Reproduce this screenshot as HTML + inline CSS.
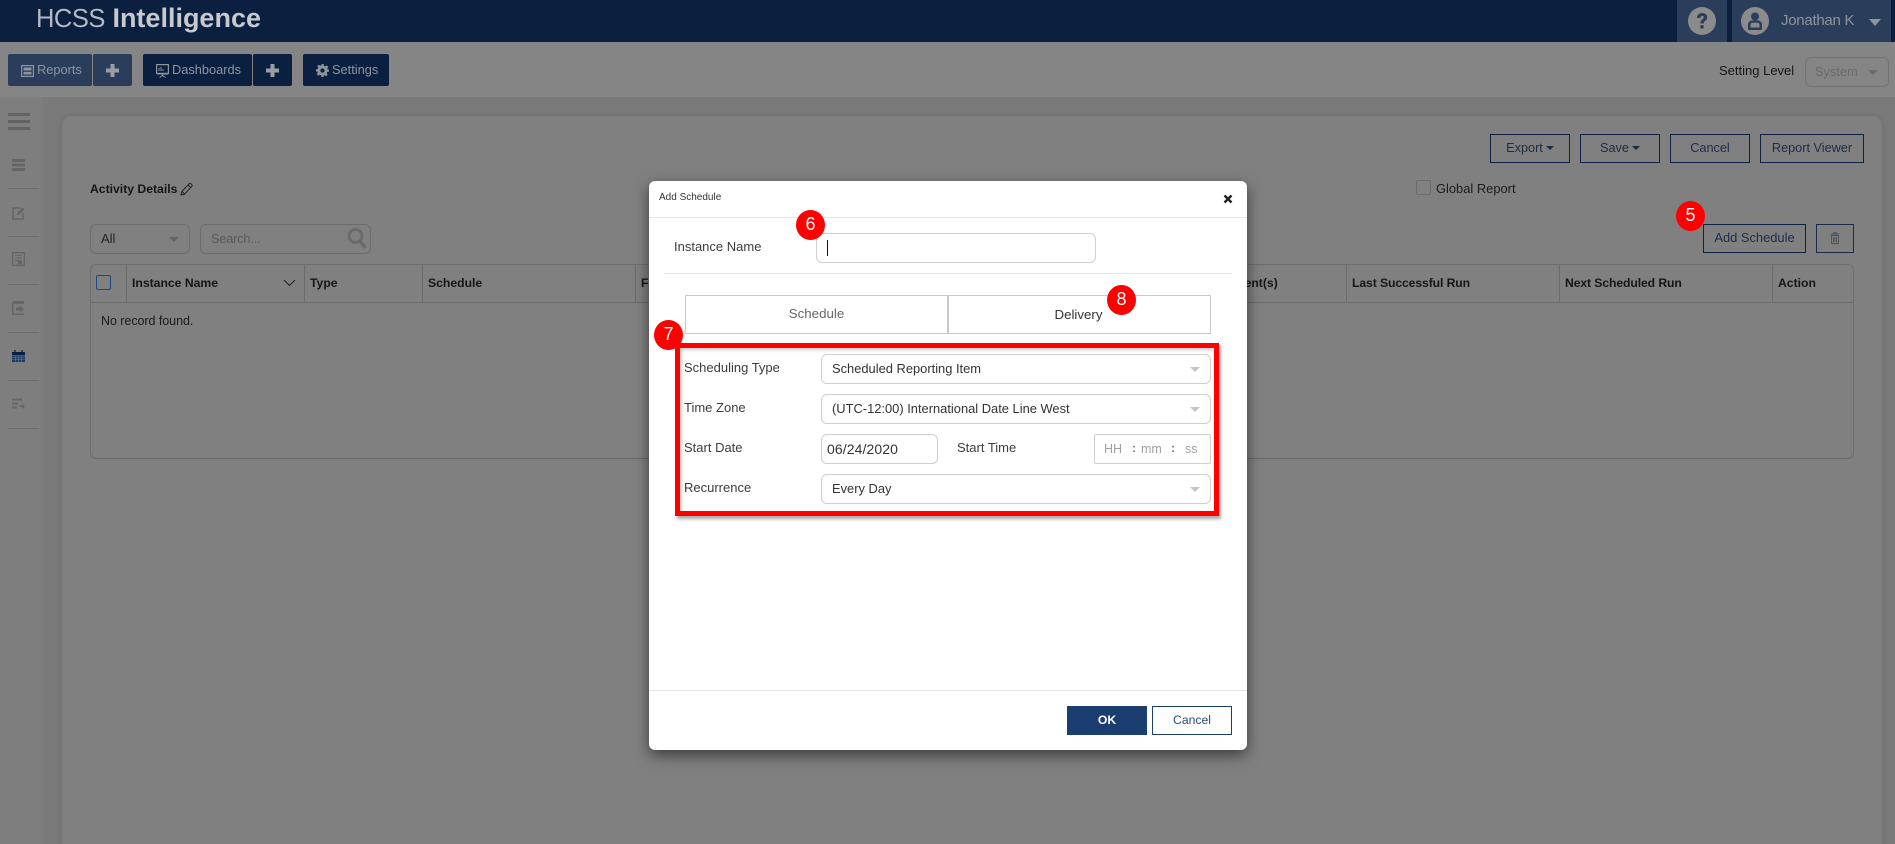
<!DOCTYPE html>
<html lang="en"><head><meta charset="utf-8"><title>HCSS Intelligence</title>
<style>
html,body{margin:0;padding:0;width:1895px;height:844px;overflow:hidden;background:#808080}
body{position:relative;font-family:"Liberation Sans",sans-serif;font-size:13px;color:#222}
.a,.t{position:absolute;box-sizing:border-box}
.t{white-space:nowrap;line-height:16px;height:16px}
.hd{font-weight:bold;font-size:12.200px;color:#161616}
.nb{background:#0b2040;border-radius:2px}
.lt{background:#2a3e5c;border-radius:2px}
.bt{color:#8e949e;font-size:12.800px;line-height:32px;white-space:nowrap}
.ob{border:1.500px solid #0e2244;color:#1c2c48;text-align:center;font-size:12.700px;line-height:26px;height:29px;white-space:nowrap}
.sep{left:8px;width:31px;height:1px;background:#6e6e6e}
.col{width:1px;top:264px;height:38px;background:#6c6c6c}
.inp{border:1px solid #cfcfcf;border-radius:6px;background:#fff;height:30px}
.lab{color:#3c3c3c;font-size:13px}
.val{color:#333;font-size:12.900px}
.arr{width:0;height:0;border-left:5px solid transparent;border-right:5px solid transparent;border-top:5px solid #c4c4c4}
.bad{width:29px;height:30px;border-radius:50%;background:#fe0000;color:#fff;font-size:18px;line-height:29px;text-align:center}
svg{position:absolute;display:block}
</style></head><body>

<!-- header -->
<div class="a" style="left:0;top:0;width:1895px;height:42px;background:#0b1f3f;box-shadow:0 1px 2px #555"></div>
<div class="t" style="left:36px;top:2px;height:32px;line-height:32px;font-size:25.500px;color:#b4bac4;letter-spacing:-.5px">HCSS <b style="color:#c6cad0;font-size:27px;letter-spacing:0;margin-left:1px">Intelligence</b></div>
<div class="a" style="left:1677px;top:0;width:50px;height:42px;background:#2a3e5c"></div>
<div class="a" style="left:1732px;top:0;width:159px;height:42px;background:#2a3e5c"></div>
<svg style="left:1688px;top:7px" width="28" height="28" viewBox="0 0 28 28"><circle cx="14" cy="14" r="14" fill="#8b8b8b"/><path d="M9 11c0-3 2.300-5 5.200-5 3 0 5 1.800 5 4.300 0 3.500-3.600 3.700-3.600 6.200h-3.300c0-4 3.500-4.300 3.500-6.100 0-.9-.7-1.500-1.700-1.500-1.100 0-1.800.8-1.900 2.100z" fill="#2a3e5c"/><rect x="12.300" y="18.200" width="3.300" height="3.300" fill="#2a3e5c"/></svg>
<svg style="left:1741px;top:7px" width="28" height="28" viewBox="0 0 28 28"><circle cx="14" cy="14" r="14" fill="#8b8b8b"/><circle cx="14" cy="9.500" r="4" fill="#2a3e5c"/><path d="M7 22v-4c0-3 2-4.500 4-4.500h6c2 0 4 1.500 4 4.500v4c0 .6-.5 1-1 1H8c-.5 0-1-.4-1-1z" fill="#2a3e5c"/><path d="M9.500 20.500v-2.500c0-1.500 1-2.200 2-2.200h5c1 0 2 .7 2 2.200v2.500z" fill="#8b8b8b"/></svg>
<div class="t" style="left:1781px;top:12px;height:18px;line-height:18px;font-size:15px;color:#8e949e;letter-spacing:-.27px">Jonathan K</div>
<div class="a" style="left:1869px;top:19px;width:0;height:0;border-left:6.500px solid transparent;border-right:6.500px solid transparent;border-top:7px solid #8e949e"></div>

<!-- toolbar -->
<div class="a" style="left:0;top:42px;width:1895px;height:55px;background:#858585"></div>
<div class="a lt" style="left:8px;top:54px;width:84px;height:32px"></div>
<div class="a lt" style="left:93px;top:54px;width:39px;height:32px"></div>
<div class="a nb" style="left:143px;top:54px;width:109px;height:32px"></div>
<div class="a nb" style="left:253px;top:54px;width:39px;height:32px"></div>
<div class="a nb" style="left:303px;top:54px;width:86px;height:32px"></div>
<svg style="left:21px;top:65px" width="13" height="12" viewBox="0 0 13 12"><rect x=".6" y=".6" width="11.800" height="10.800" fill="none" stroke="#8e949e" stroke-width="1.200"/><rect x="2.500" y="2.500" width="8" height="3" fill="#8e949e"/><rect x="2.500" y="6.800" width="8" height="2.700" fill="#8e949e"/></svg>
<div class="a bt" style="left:37px;top:54px">Reports</div>
<svg style="left:105px;top:63px" width="15" height="15" viewBox="0 0 15 15"><path d="M5.500 1h4v4.500H14v4H9.500V14h-4V9.500H1v-4h4.500z" fill="#9a9ea6"/></svg>
<svg style="left:156px;top:64px" width="13" height="14" viewBox="0 0 13 14"><rect x=".6" y=".6" width="11.800" height="8.800" fill="none" stroke="#8e949e" stroke-width="1.200"/><path d="M3 7V4M5 7V3M7 7V5M1 10h11M6.500 10v1.500M3.500 13.500l3-2 3 2" stroke="#8e949e" fill="none"/></svg>
<div class="a bt" style="left:172px;top:54px">Dashboards</div>
<svg style="left:265px;top:63px" width="15" height="15" viewBox="0 0 15 15"><path d="M5.500 1h4v4.500H14v4H9.500V14h-4V9.500H1v-4h4.500z" fill="#9a9ea6"/></svg>
<svg style="left:316px;top:64px" width="13" height="13" viewBox="0 0 24 24"><path fill="#8e949e" d="M10 0h4l.7 3.400 2.300 1 2.900-1.900 2.800 2.800L20.800 8l1 2.300L24 10v4l-3.300.7-1 2.300 1.900 2.900-2.800 2.800-2.800-1.900-2.300 1L14 24h-4l-.7-3.300-2.300-1-2.800 1.900-2.800-2.800L3.300 16l-1-2.300L0 14v-4l3.300-.7 1-2.300-1.900-2.800 2.800-2.800L8 3.300l2.300-1zM12 8a4 4 0 100 8 4 4 0 000-8z"/></svg>
<div class="a bt" style="left:332px;top:54px">Settings</div>
<div class="t" style="left:1719px;top:63px;font-size:13px;color:#161616">Setting Level</div>
<div class="a" style="left:1805px;top:57px;width:84px;height:30px;border:1px solid #737373;border-radius:6px"></div>
<div class="t" style="left:1815px;top:64px;font-size:12.800px;color:#6a6a6a">System</div>
<div class="a arr" style="left:1868px;top:70px;border-top-color:#6a6a6a"></div>

<!-- side + main -->
<div class="a" style="left:0;top:97px;width:43px;height:747px;background:#7e7e7e"></div>
<div class="a" style="left:43px;top:97px;width:1852px;height:747px;background:#7a7a7a"></div>
<svg style="left:8px;top:113px" width="22" height="17"><path d="M0 0h22v3H0zM0 7h22v3H0zM0 14h22v3H0z" fill="#636363"/></svg>
<svg style="left:12px;top:159px" width="13" height="12"><path d="M0 0h13v3H0zM0 4.500h13v3H0zM0 9h13v3H0z" fill="#656565"/></svg>
<div class="a sep" style="top:188px"></div>
<svg style="left:12px;top:206px" width="13" height="14" viewBox="0 0 13 14"><path d="M8 2H1v11h10V7" fill="none" stroke="#656565" stroke-width="1.500"/><path d="M5 9l.5-2.500L10.500 1.500 12.500 3.500 7.500 8.500z" fill="#656565"/></svg>
<div class="a sep" style="top:236px"></div>
<svg style="left:12px;top:252px" width="13" height="14" viewBox="0 0 13 14"><path d="M.7.700h11.600v12.600H.7z" fill="none" stroke="#656565" stroke-width="1.300"/><path d="M3 3.500h7M3 6h7M3 8.500h3" stroke="#656565"/><circle cx="8" cy="10" r="2.300" fill="#656565"/></svg>
<div class="a sep" style="top:284px"></div>
<svg style="left:12px;top:301px" width="13" height="14" viewBox="0 0 13 14"><path d="M.7 2h11.600M.7 2v11.300h11" fill="none" stroke="#656565" stroke-width="1.500"/><path d="M1 0h11v2.500H1z" fill="#656565"/><path d="M4 6.500h4V4.500l4 3.500-4 3.500v-2H4z" fill="#656565"/></svg>
<div class="a sep" style="top:332px"></div>
<svg style="left:12px;top:350px" width="13" height="12" viewBox="0 0 13 12"><path d="M0 2h13v3H0z" fill="#0b2040"/><path d="M0 5.500h13V12H0z" fill="#1a3a66"/><path d="M3 0v3M10 0v3" stroke="#0b2040" stroke-width="1.300"/><path d="M0 7.500h13M0 9.700h13M3.200 6v6M6.500 6v6M9.800 6v6" stroke="#7e7e7e" stroke-width=".5"/></svg>
<div class="a sep" style="top:380px"></div>
<svg style="left:12px;top:398px" width="13" height="11" viewBox="0 0 13 11"><path d="M0 .5h10v2H0zM0 4.500h6v2H0zM0 8.500h5v2H0z" fill="#656565"/><path d="M7 7.500h3v-2l3 3-3 2.500v-2H7z" fill="#656565"/></svg>
<div class="a sep" style="top:428px"></div>

<!-- card -->
<div class="a" style="left:62px;top:116px;width:1820px;height:740px;background:#808080;border-radius:9px 9px 0 0;box-shadow:0 0 5px #6a6a6a"></div>

<div class="a ob" style="left:1490px;top:134px;width:80px">Export<span style="display:inline-block;margin-left:3px;vertical-align:2px;border-left:4px solid transparent;border-right:4px solid transparent;border-top:4px solid #1c2c48"></span></div>
<div class="a ob" style="left:1580px;top:134px;width:80px">Save<span style="display:inline-block;margin-left:3px;vertical-align:2px;border-left:4px solid transparent;border-right:4px solid transparent;border-top:4px solid #1c2c48"></span></div>
<div class="a ob" style="left:1670px;top:134px;width:80px">Cancel</div>
<div class="a ob" style="left:1760px;top:134px;width:104px">Report Viewer</div>

<div class="t hd" style="left:90px;top:181px">Activity Details</div>
<svg style="left:180px;top:182px" width="13" height="14" viewBox="0 0 13 14"><path d="M1 13l.8-3.500L9 1.800a1.300 1.300 0 012 0l.8.800a1.300 1.300 0 010 1.800L4.500 12.200zM8 3l2.800 2.800M2 9.500L4.500 12" fill="none" stroke="#222" stroke-width="1"/></svg>

<div class="a" style="left:1416px;top:180px;width:15px;height:15px;border:1px solid #6c6c6c;border-radius:2px"></div>
<div class="t" style="left:1436px;top:181px;font-size:12.900px;color:#1c1c1c">Global Report</div>

<div class="a" style="left:90px;top:224px;width:100px;height:30px;border:1px solid #6c6c6c;border-radius:6px"></div>
<div class="t" style="left:101px;top:231px;font-size:13px;color:#222">All</div>
<div class="a arr" style="left:169px;top:237px;border-top-color:#666"></div>
<div class="a" style="left:200px;top:224px;width:171px;height:30px;border:1px solid #6c6c6c;border-radius:6px"></div>
<div class="t" style="left:211px;top:231px;font-size:12.800px;color:#5a5a5a;letter-spacing:-.2px">Search...</div>
<svg style="left:347px;top:227px" width="21" height="23" viewBox="0 0 21 23"><circle cx="8.500" cy="9" r="6.500" fill="none" stroke="#6a6a6a" stroke-width="2.800"/><path d="M13 14l5.500 7" stroke="#6a6a6a" stroke-width="3.500"/></svg>

<div class="a" style="left:1703px;top:224px;width:103px;height:29px;border:1.500px solid #0e2244;color:#1c2c48;text-align:center;font-size:12.900px;line-height:26px;white-space:nowrap">Add Schedule</div>
<div class="a" style="left:1816px;top:224px;width:38px;height:29px;border:1px solid #1c2c48"></div>
<svg style="left:1830px;top:232px" width="10" height="12" viewBox="0 0 10 12"><path d="M.5 2h9M3.500 2V.7h3V2M1.500 3.500h7V11.500h-7zM3.500 5v5M5 5v5M6.500 5v5" fill="none" stroke="#4a4f58" stroke-width=".9"/></svg>

<!-- table -->
<div class="a" style="left:90px;top:264px;width:1764px;height:195px;border:1px solid #6c6c6c;border-radius:6px"></div>
<div class="a" style="left:90px;top:302px;width:1764px;height:1px;background:#6c6c6c"></div>
<div class="a col" style="left:126px"></div><div class="a col" style="left:304px"></div><div class="a col" style="left:422px"></div><div class="a col" style="left:635px"></div>
<div class="a col" style="left:1346px"></div><div class="a col" style="left:1559px"></div><div class="a col" style="left:1772px"></div>
<div class="a" style="left:96px;top:275px;width:15px;height:15px;border:1.500px solid #1c4a80;border-radius:2px"></div>
<div class="t hd" style="left:132px;top:275px">Instance Name</div>
<svg style="left:283px;top:279px" width="13" height="8"><path d="M1 1l5.500 5.500L12 1" fill="none" stroke="#222"/></svg>
<div class="t hd" style="left:310px;top:275px">Type</div>
<div class="t hd" style="left:428px;top:275px">Schedule</div>
<div class="t hd" style="left:641px;top:275px">Format</div>
<div class="t hd" style="left:1208px;top:275px">Recipient(s)</div>
<div class="t hd" style="left:1352px;top:275px;letter-spacing:-.1px">Last Successful Run</div>
<div class="t hd" style="left:1565px;top:275px;letter-spacing:-.1px">Next Scheduled Run</div>
<div class="t hd" style="left:1778px;top:275px">Action</div>
<div class="t" style="left:101px;top:313px;font-size:12.500px;color:#1c1c1c;letter-spacing:-.05px">No record found.</div>

<!-- badge 5 -->
<div class="a bad" style="left:1676px;top:201px">5</div>

<!-- dialog -->
<div class="a" style="left:649px;top:181px;width:598px;height:569px;background:#fff;border-radius:6px;box-shadow:0 5px 15px rgba(0,0,0,.55)"></div>
<div class="t" style="left:659px;top:190px;font-size:10px;color:#333">Add Schedule</div>
<svg style="left:1223px;top:194px" width="10" height="10" viewBox="0 0 10 10"><path d="M1.500 1.500l7 7M8.500 1.500l-7 7" stroke="#222" stroke-width="2.400"/></svg>
<div class="a" style="left:649px;top:217px;width:598px;height:1px;background:#e5e5e5"></div>
<div class="t lab" style="left:674px;top:239px">Instance Name</div>
<div class="a inp" style="left:816px;top:233px;width:280px"></div>
<div class="a" style="left:827px;top:240px;width:1px;height:16px;background:#111"></div>
<div class="a" style="left:664px;top:273px;width:568px;height:1px;background:#e8e8e8"></div>

<div class="a" style="left:685px;top:295px;width:263px;height:39px;border:1px solid #c8c8c8;text-align:center;line-height:36px;font-size:13.300px;color:#666">Schedule</div>
<div class="a" style="left:948px;top:295px;width:263px;height:39px;border:1px solid #c8c8c8;text-align:center;line-height:37px;font-size:13.300px;color:#333;padding-right:2px">Delivery</div>

<div class="a" style="left:675px;top:343px;width:544px;height:173px;border:5px solid #fe0000;box-shadow:2px 3px 3px #aaa,inset 2px 2px 3px #ccc"></div>

<div class="t lab" style="left:684px;top:360px">Scheduling Type</div>
<div class="a inp" style="left:821px;top:354px;width:390px"></div>
<div class="t val" style="left:832px;top:361px">Scheduled Reporting Item</div>
<div class="a arr" style="left:1190px;top:367px"></div>

<div class="t lab" style="left:684px;top:400px">Time Zone</div>
<div class="a inp" style="left:821px;top:394px;width:390px"></div>
<div class="t val" style="left:832px;top:401px">(UTC-12:00) International Date Line West</div>
<div class="a arr" style="left:1190px;top:407px"></div>

<div class="t lab" style="left:684px;top:440px">Start Date</div>
<div class="a inp" style="left:821px;top:434px;width:117px"></div>
<div class="t val" style="left:827px;top:441px;font-size:14px;letter-spacing:.1px">06/24/2020</div>
<div class="t lab" style="left:957px;top:440px">Start Time</div>
<div class="a inp" style="left:1094px;top:434px;width:117px;border-radius:2px"></div>
<div class="t" style="left:1104px;top:441px;font-size:12.500px;color:#a0a0a0">HH</div>
<div class="t" style="left:1132px;top:440px;font-size:12.200px;font-weight:bold;color:#777">:</div>
<div class="t" style="left:1141px;top:441px;font-size:12.500px;color:#a0a0a0">mm</div>
<div class="t" style="left:1171px;top:440px;font-size:12.200px;font-weight:bold;color:#777">:</div>
<div class="t" style="left:1185px;top:441px;font-size:12.500px;color:#a0a0a0">ss</div>

<div class="t lab" style="left:684px;top:480px">Recurrence</div>
<div class="a inp" style="left:821px;top:474px;width:390px"></div>
<div class="t val" style="left:832px;top:481px">Every Day</div>
<div class="a arr" style="left:1190px;top:487px"></div>

<div class="a bad" style="left:796px;top:210px">6</div>
<div class="a bad" style="left:654px;top:320px">7</div>
<div class="a bad" style="left:1107px;top:285px">8</div>

<div class="a" style="left:649px;top:690px;width:598px;height:1px;background:#e5e5e5"></div>
<div class="a" style="left:1067px;top:706px;width:80px;height:29px;background:#1a3e70;color:#fff;text-align:center;font-weight:bold;font-size:12.200px;line-height:29px">OK</div>
<div class="a" style="left:1152px;top:706px;width:80px;height:29px;border:1px solid #1a3e70;color:#2a4a78;text-align:center;font-size:12.200px;line-height:27px">Cancel</div>
</body></html>
